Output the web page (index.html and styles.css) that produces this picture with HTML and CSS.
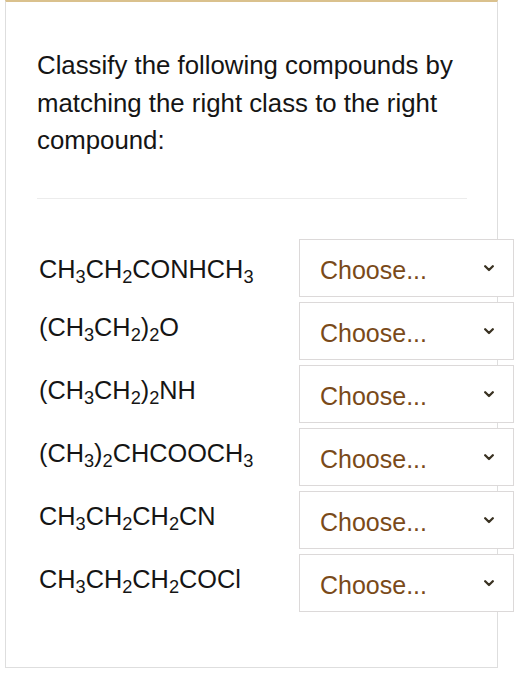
FILE: index.html
```html
<!DOCTYPE html>
<html lang="en">
<head>
  <meta charset="UTF-8" />
  <meta name="viewport" content="width=device-width, initial-scale=1.0"/>
  <title>Match the compounds</title>
  <link rel="stylesheet" href="styles.css">
</head>
<body>
  <div class="card">
    <p class="question">Classify the following compounds by matching the right class to the right compound:</p>
    <hr class="divider">

    <div class="rows">
      <div class="row">
        <div class="compound">CH<sub>3</sub>CH<sub>2</sub>CONHCH<sub>3</sub></div>
        <div class="pick">
          <select><option>Choose...</option></select>
          <svg class="chevron" width="10" height="7" viewBox="0 0 10 7"><path d="M1.2 1.3 L5 5 L8.8 1.3" /></svg>
        </div>
      </div>
      <div class="row">
        <div class="compound">(CH<sub>3</sub>CH<sub>2</sub>)<sub>2</sub>O</div>
        <div class="pick">
          <select><option>Choose...</option></select>
          <svg class="chevron" width="10" height="7" viewBox="0 0 10 7"><path d="M1.2 1.3 L5 5 L8.8 1.3" /></svg>
        </div>
      </div>
      <div class="row">
        <div class="compound">(CH<sub>3</sub>CH<sub>2</sub>)<sub>2</sub>NH</div>
        <div class="pick">
          <select><option>Choose...</option></select>
          <svg class="chevron" width="10" height="7" viewBox="0 0 10 7"><path d="M1.2 1.3 L5 5 L8.8 1.3" /></svg>
        </div>
      </div>
      <div class="row">
        <div class="compound">(CH<sub>3</sub>)<sub>2</sub>CHCOOCH<sub>3</sub></div>
        <div class="pick">
          <select><option>Choose...</option></select>
          <svg class="chevron" width="10" height="7" viewBox="0 0 10 7"><path d="M1.2 1.3 L5 5 L8.8 1.3" /></svg>
        </div>
      </div>
      <div class="row">
        <div class="compound">CH<sub>3</sub>CH<sub>2</sub>CH<sub>2</sub>CN</div>
        <div class="pick">
          <select><option>Choose...</option></select>
          <svg class="chevron" width="10" height="7" viewBox="0 0 10 7"><path d="M1.2 1.3 L5 5 L8.8 1.3" /></svg>
        </div>
      </div>
      <div class="row">
        <div class="compound">CH<sub>3</sub>CH<sub>2</sub>CH<sub>2</sub>COCl</div>
        <div class="pick">
          <select><option>Choose...</option></select>
          <svg class="chevron" width="10" height="7" viewBox="0 0 10 7"><path d="M1.2 1.3 L5 5 L8.8 1.3" /></svg>
        </div>
      </div>
    </div>
  </div>
</body>
</html>
```

FILE: styles.css
```css
body {
  margin: 0;
  font-family: "Liberation Sans", Arial, sans-serif;
  color: #151515;
  background-color: #fff;
}
.card {
  margin-left: 5px;
  box-sizing: border-box;
  width: 493px;
  padding: 45px 30px 55px 31px;
  border: 1px solid #dedede;
  border-top: 2px solid #dac18d;
}
.question {
  margin: 0;
  font-size: 25.8px;
  line-height: 37.5px;
}
.divider {
  margin: 38px 0 40px;
  border: none;
  border-top: 1px solid #ececec;
}
.rows {
  display: flex;
  flex-direction: column;
  gap: 5px;
}
.row {
  display: flex;
  align-items: flex-start;
}
.compound {
  width: 262px;
  flex-shrink: 0;
  padding-left: 2px;
  box-sizing: border-box;
  font-size: 25.3px;
  line-height: 50px;
}
.row:first-child .compound {
  padding-top: 5px;
}
.compound sub {
  font-size: 0.72em;
  line-height: 0;
  vertical-align: -5px;
}
.pick {
  position: relative;
  flex-shrink: 0;
  width: 215px;
}
.pick select {
  -webkit-appearance: none;
  appearance: none;
  display: block;
  width: 100%;
  height: 58px;
  margin: 0;
  padding: 4px 30px 0 20px;
  border: 1px solid #dcd9d9;
  border-radius: 0;
  background-color: #fff;
  font-family: "Liberation Sans", Arial, sans-serif;
  font-size: 25px;
  color: #7a4a19;
}
.chevron {
  position: absolute;
  right: 20px;
  top: 26px;
  pointer-events: none;
}
.chevron path {
  fill: none;
  stroke: #3a3222;
  stroke-width: 2.3;
  stroke-linecap: round;
  stroke-linejoin: round;
}
```
